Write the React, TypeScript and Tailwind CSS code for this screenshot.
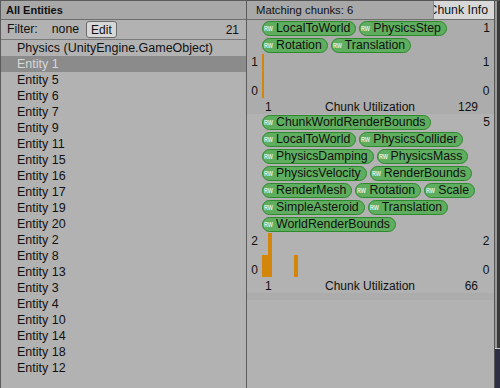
import React from "react";

const entities = [
  "Physics (UnityEngine.GameObject)",
  "Entity 1",
  "Entity 5",
  "Entity 6",
  "Entity 7",
  "Entity 9",
  "Entity 11",
  "Entity 15",
  "Entity 16",
  "Entity 17",
  "Entity 19",
  "Entity 20",
  "Entity 2",
  "Entity 8",
  "Entity 13",
  "Entity 3",
  "Entity 4",
  "Entity 10",
  "Entity 14",
  "Entity 18",
  "Entity 12",
];

function Pill({ name }: { name: string }) {
  return (
    <div className="flex h-[15px] items-center rounded-full border border-[#2d8a2d] bg-[#5fae5f] pl-[1px] pr-[5px]">
      <span className="mr-[3px] flex h-[11px] w-[9px] items-center overflow-visible">
        <span className="inline-block origin-left scale-x-[0.68] text-[8px] font-bold leading-none text-[#e2ede2]">
          RW
        </span>
      </span>
      <span className="text-[12.3px] leading-none text-[#111]">{name}</span>
    </div>
  );
}

function Section({
  rows,
  count,
  bg,
  top,
  max,
  bars,
}: {
  rows: string[][];
  count: string;
  bg: string;
  top: string;
  max: string;
  bars: { x: number; w: number; y: number; h: number }[];
}) {
  return (
    <div className={`pt-[1px] ${bg}`}>
      <div className="flex items-start">
        <div className="flex flex-1 flex-col gap-[2px] pl-[15px]">
          {rows.map((r, i) => (
            <div key={i} className="flex gap-[3px]">
              {r.map((n) => (
                <Pill key={n} name={n} />
              ))}
            </div>
          ))}
        </div>
        <div className="pr-[4px] text-[12px] leading-[15px]">{count}</div>
      </div>
      <div className="mt-[1px] flex">
        <div className="flex h-[44px] w-[15px] flex-col justify-between pr-[4px] pt-[1px] text-right text-[12px] leading-[14px]">
          <span>{top}</span>
          <span>0</span>
        </div>
        <svg width="216" height="44" className="block">
          {bars.map((b, i) => (
            <rect key={i} x={b.x} y={b.y} width={b.w} height={b.h} fill="#d4860b" />
          ))}
        </svg>
        <div className="flex h-[44px] w-[16px] flex-col justify-between pt-[1px] text-center text-[12px] leading-[14px]">
          <span>{top}</span>
          <span>0</span>
        </div>
      </div>
      <div className="ml-[15px] mt-[2px] grid w-[216px] grid-cols-[1fr_auto_1fr] text-[12px] leading-[14px]">
        <span className="pl-[3px]">1</span>
        <span>Chunk Utilization</span>
        <span className="text-right">{max}</span>
      </div>
    </div>
  );
}

export default function App() {
  return (
    <div
      className="flex h-[388px] w-[500px] overflow-hidden bg-[#b2b2b2] text-[#111]"
      style={{ fontFamily: '"Liberation Sans", Arial, sans-serif' }}
    >
      {/* Left panel */}
      <div className="flex w-[247px] flex-col border-l border-r border-t border-[#5c5c5c]">
        <div className="flex h-[19px] items-center border-b border-[#6e6e6e] bg-[#a8a8a8] pl-[5px] text-[11px] font-bold">
          All Entities
        </div>
        <div className="flex h-[20px] items-center border-b border-[#7a7a7a] pl-[6px] pr-[6px] text-[12.3px]">
          <span>Filter:</span>
          <span className="ml-[14px]">none</span>
          <span className="ml-[7px] flex h-[17px] items-center rounded-[3px] border border-[#6a6a6a] bg-[#d8d8d8] px-[4px] text-[12px]">
            Edit
          </span>
          <span className="ml-auto pr-[1px] text-[12px]">21</span>
        </div>
        <div className="flex flex-col">
          {entities.map((e, i) => (
            <div
              key={e}
              className={`flex h-[16px] items-center pl-[16px] pt-[1px] text-[12.5px] ${
                i === 1 ? "bg-[#8b8b8b] text-[#d8d8d8]" : ""
              }`}
            >
              {e}
            </div>
          ))}
        </div>
      </div>

      {/* Right panel */}
      <div className="flex w-[248px] flex-col border-r border-t border-[#555]">
        <div className="flex h-[19px] items-center border-b border-[#6e6e6e] bg-[#a8a8a8] text-[11.3px]">
          <span className="pl-[9px]">Matching chunks: 6</span>
          <div className="ml-auto flex h-full w-[61px] items-center justify-end overflow-hidden whitespace-nowrap border-l border-[#8a8a8a] bg-[#d8d8d8] pr-[6px] text-[12.3px]">
            Chunk Info
          </div>
        </div>
        <Section
          bg="bg-[#acacac]"
          rows={[
            ["LocalToWorld", "PhysicsStep"],
            ["Rotation", "Translation"],
          ]}
          count="1"
          top="1"
          max="129"
          bars={[{ x: 0, w: 2, y: 0, h: 44 }]}
        />
        <Section
          bg="bg-[#b2b2b2]"
          rows={[
            ["ChunkWorldRenderBounds"],
            ["LocalToWorld", "PhysicsCollider"],
            ["PhysicsDamping", "PhysicsMass"],
            ["PhysicsVelocity", "RenderBounds"],
            ["RenderMesh", "Rotation", "Scale"],
            ["SimpleAsteroid", "Translation"],
            ["WorldRenderBounds"],
          ]}
          count="5"
          top="2"
          max="66"
          bars={[
            { x: 0, w: 6, y: 22, h: 22 },
            { x: 6, w: 4, y: 0, h: 44 },
            { x: 32, w: 4, y: 22, h: 22 },
          ]}
        />
        <div className="h-[7px] bg-[#acacac]" />
      </div>

      {/* Right strip (neighbour window) */}
      <div className="flex w-[5px] flex-col border-t border-[#555]">
        <div className="h-[347px] border-r-[3px] border-[#3a3a3a] bg-[#9a9a9a]" />
        <div className="flex-1 border-t border-[#c8c8c8] bg-[#2e2f42]" />
      </div>
    </div>
  );
}
